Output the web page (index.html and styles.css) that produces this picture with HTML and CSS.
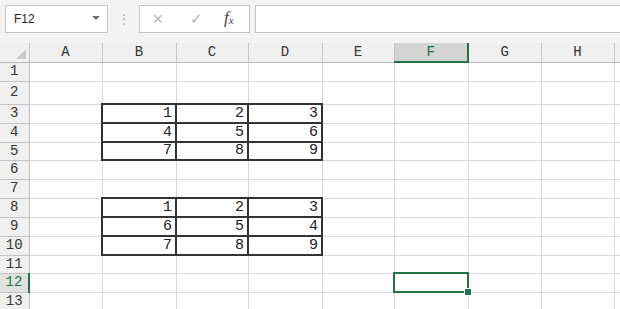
FILE: index.html
```html
<!DOCTYPE html>
<html lang="en">
<head>
    <meta charset="UTF-8">
    <title>Sheet</title>
    <link rel="stylesheet" href="styles.css">
</head>
<body>
  <div class="app">
    <div class="toolbar">
      <div class="namebox">
        <span>F12</span>
        <span class="arrow"></span>
      </div>
      <div class="dots">&#8942;</div>
      <div class="fbuttons">
        <span class="fbtn x">&#10005;</span>
        <span class="fbtn ok">&#10003;</span>
        <span class="fbtn fx">f<sub>x</sub></span>
      </div>
      <div class="formula"></div>
    </div>

    <table class="sheet">
      <colgroup>
        <col class="c-head">
        <col class="c73"><col class="c74"><col class="c72"><col class="c74">
        <col class="c72"><col class="c74"><col class="c73"><col class="c73"><col class="c73">
      </colgroup>
      <tr class="hdr">
        <th class="corner"><span class="tri"></span></th>
        <th>A</th><th>B</th><th>C</th><th>D</th><th>E</th><th class="active">F</th><th>G</th><th>H</th><th></th>
      </tr>
      <tr><th>1</th><td></td><td></td><td></td><td></td><td></td><td></td><td></td><td></td><td></td></tr>
      <tr class="tall"><th>2</th><td></td><td></td><td></td><td></td><td></td><td></td><td></td><td></td><td></td></tr>
      <tr><th>3</th><td></td><td class="bx">1</td><td class="bx">2</td><td class="bx">3</td><td></td><td></td><td></td><td></td><td></td></tr>
      <tr><th>4</th><td></td><td class="bx">4</td><td class="bx">5</td><td class="bx">6</td><td></td><td></td><td></td><td></td><td></td></tr>
      <tr class="short"><th>5</th><td></td><td class="bx">7</td><td class="bx">8</td><td class="bx">9</td><td></td><td></td><td></td><td></td><td></td></tr>
      <tr><th>6</th><td></td><td></td><td></td><td></td><td></td><td></td><td></td><td></td><td></td></tr>
      <tr><th>7</th><td></td><td></td><td></td><td></td><td></td><td></td><td></td><td></td><td></td></tr>
      <tr><th>8</th><td></td><td class="bx">1</td><td class="bx">2</td><td class="bx">3</td><td></td><td></td><td></td><td></td><td></td></tr>
      <tr><th>9</th><td></td><td class="bx">6</td><td class="bx">5</td><td class="bx">4</td><td></td><td></td><td></td><td></td><td></td></tr>
      <tr><th>10</th><td></td><td class="bx">7</td><td class="bx">8</td><td class="bx">9</td><td></td><td></td><td></td><td></td><td></td></tr>
      <tr class="short"><th>11</th><td></td><td></td><td></td><td></td><td></td><td></td><td></td><td></td><td></td></tr>
      <tr><th class="active">12</th><td></td><td></td><td></td><td></td><td></td><td class="sel"></td><td></td><td></td><td></td></tr>
      <tr><th>13</th><td></td><td></td><td></td><td></td><td></td><td></td><td></td><td></td><td></td></tr>
    </table>
  </div>
</body>
</html>
```

FILE: styles.css
```css
:root{
    --grid:#dadada;
    --head-line:#c4c4c4;
    --green:#217346;
}
*{
    box-sizing: border-box;
}
body{
    margin: 0;
    width: 620px;
    height: 309px;
    overflow: hidden;
    background-color: #fff;
    font-family: "Liberation Sans", Arial, sans-serif;
}
.app{
    width: 620px;
    overflow: hidden;
}
.toolbar{
    display: flex;
    align-items: flex-start;
    height: 43px;
    padding: 5px 0 0 5px;
    background-color: #f3f3f3;
}
.namebox{
    display: flex;
    align-items: center;
    justify-content: space-between;
    width: 103px;
    height: 28px;
    padding: 0 7px 0 8px;
    background-color: #fff;
    border: 1px solid #c6c6c6;
    font-size: 12px;
    color: #222;
}
.arrow{
    width: 0;
    height: 0;
    border-left: 4px solid transparent;
    border-right: 4px solid transparent;
    border-top: 4px solid #6a6a6a;
    margin-top: -2px;
}
.dots{
    width: 31px;
    height: 28px;
    line-height: 28px;
    text-align: center;
    color: #b8b8b8;
    font-size: 14px;
}
.fbuttons{
    display: flex;
    align-items: center;
    width: 111px;
    height: 28px;
    padding-left: 12px;
    background-color: #fff;
    border: 1px solid #c6c6c6;
}
.fbtn{
    font-size: 14px;
    color: #b4b4b4;
}
.fbtn.x{
    width: 38px;
}
.fbtn.ok{
    width: 34px;
    font-size: 15px;
}
.fbtn.fx{
    font-family: "Liberation Serif", serif;
    font-style: italic;
    color: #444;
    font-size: 17px;
    line-height: 17px;
}
.fbtn.fx sub{
    font-size: 11px;
    vertical-align: -1px;
}
.formula{
    flex: 1;
    height: 28px;
    margin-left: 5px;
    background-color: #fff;
    border: 1px solid #c6c6c6;
    border-right: 0;
}

.sheet{
    table-layout: fixed;
    border-collapse: collapse;
    width: 687px;
    font-family: "Liberation Mono", "Courier New", monospace;
    font-size: 15px;
    color: #222;
}
.c-head{ width: 29px; }
.c72{ width: 72px; }
.c73{ width: 73px; }
.c74{ width: 74px; }

.sheet tr{
    height: 19px;
}
.sheet tr.tall{
    height: 23px;
}
.sheet tr.short{
    height: 18px;
}
.sheet th{
    padding: 0;
    font-weight: normal;
    background-color: #f0f0f0;
    border: 1px solid var(--head-line);
    color: #333;
    text-align: center;
    font-size: 14px;
    line-height: 17px;
}
.sheet tr.hdr th{
    border-top: 0;
    border-bottom-color: #b9b9b9;
}
.sheet tr th:first-child{
    border-left: 0;
}
.sheet td{
    padding: 0 3px 0 0;
    border: 1px solid var(--grid);
    text-align: right;
    line-height: 16px;
}
.corner{
    position: relative;
}
.tri{
    position: absolute;
    right: 3px;
    bottom: 3px;
    width: 0;
    height: 0;
    border-left: 10px solid transparent;
    border-bottom: 10px solid #c9c9c9;
}
.sheet td.bx{
    border: 2px solid #333;
}
.sheet tr.hdr th.active{
    background-color: #d4d4d4;
    border-bottom: 2px solid var(--green);
    color: var(--green);
}
.sheet th.active{
    background-color: #e1e1e1;
    border-right: 2px solid var(--green);
    color: var(--green);
}
.sheet td.sel{
    position: relative;
    border: 2px solid var(--green);
}
.sheet td.sel::after{
    content: "";
    position: absolute;
    right: -5px;
    bottom: -5px;
    width: 6px;
    height: 6px;
    background-color: var(--green);
    border: 1px solid #fff;
}
```
